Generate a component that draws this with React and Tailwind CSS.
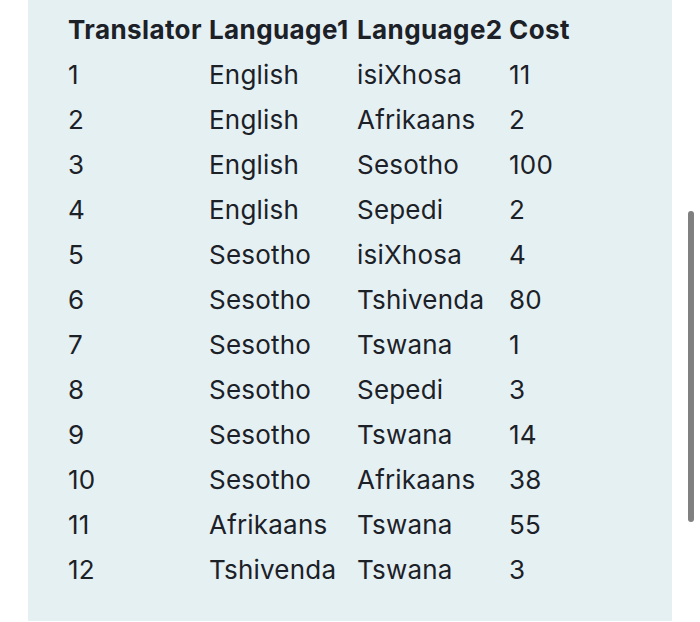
import React from 'react';

const rows = [
  ['1', 'English', 'isiXhosa', '11'],
  ['2', 'English', 'Afrikaans', '2'],
  ['3', 'English', 'Sesotho', '100'],
  ['4', 'English', 'Sepedi', '2'],
  ['5', 'Sesotho', 'isiXhosa', '4'],
  ['6', 'Sesotho', 'Tshivenda', '80'],
  ['7', 'Sesotho', 'Tswana', '1'],
  ['8', 'Sesotho', 'Sepedi', '3'],
  ['9', 'Sesotho', 'Tswana', '14'],
  ['10', 'Sesotho', 'Afrikaans', '38'],
  ['11', 'Afrikaans', 'Tswana', '55'],
  ['12', 'Tshivenda', 'Tswana', '3'],
];

const headers = ['Translator', 'Language1', 'Language2', 'Cost'];

const App = () => {
  return (
    <div className="relative w-[700px] h-[622px] bg-white overflow-hidden" style={{ fontFamily: 'Inter, "Noto Sans", sans-serif' }}>
      <div className="mx-[28px] h-[621px] bg-[#e5f0f3] pl-[40px] pt-[7px] text-[#1b2127]">
        <div className="grid grid-cols-[141px_148px_152px_auto] text-[26px] leading-[45px]">
          {headers.map((h) => (
            <div key={h} className="font-bold tracking-[0.4px] whitespace-nowrap">{h}</div>
          ))}
          {rows.map((row, i) =>
            row.map((cell, j) => (
              <div key={`${i}-${j}`} className="tracking-[0.2px]">{cell}</div>
            ))
          )}
        </div>
      </div>

      {/* scroll indicator */}
      <div className="absolute left-[688px] top-[211px] w-[6px] h-[311px] rounded-full bg-[#808080]" />
    </div>
  );
};

export default App;
